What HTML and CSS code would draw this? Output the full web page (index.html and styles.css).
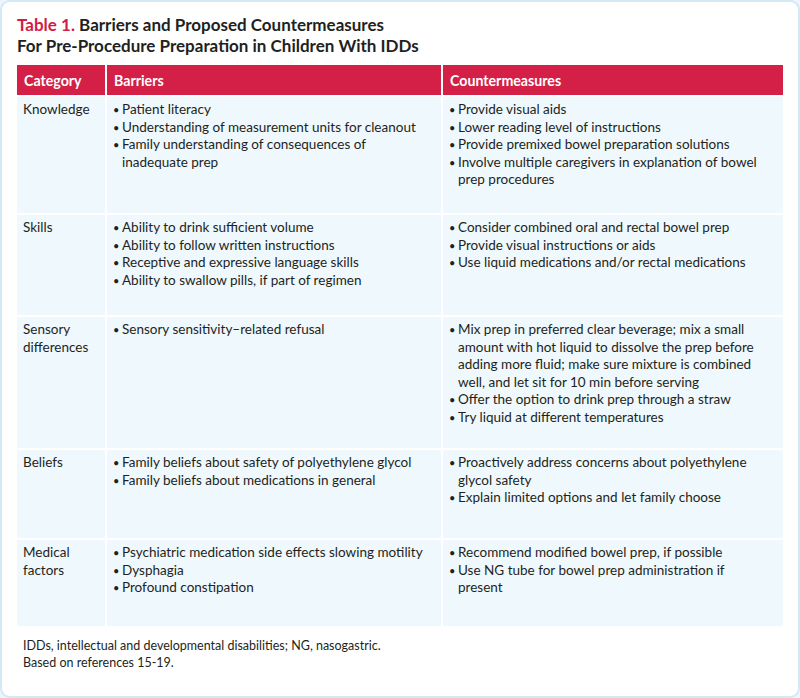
FILE: index.html
```html
<!DOCTYPE html>
<html>
<head>
<meta charset="utf-8">
<link rel="stylesheet" href="styles.css">
</head>
<body>
<div class="card">
  <h1 class="title"><span class="label">Table 1.</span> Barriers and Proposed Countermeasures<br>For Pre-Procedure Preparation in Children With IDDs</h1>
  <div class="table">
    <div class="th">Category</div>
    <div class="th">Barriers</div>
    <div class="th">Countermeasures</div>

    <div class="td cat">Knowledge</div>
    <div class="td"><ul>
      <li>Patient literacy</li>
      <li>Understanding of measurement units for cleanout</li>
      <li>Family understanding of consequences of inadequate prep</li>
    </ul></div>
    <div class="td cm"><ul>
      <li>Provide visual aids</li>
      <li>Lower reading level of instructions</li>
      <li>Provide premixed bowel preparation solutions</li>
      <li>Involve multiple caregivers in explanation of bowel prep procedures</li>
    </ul></div>

    <div class="td cat">Skills</div>
    <div class="td"><ul>
      <li>Ability to drink sufficient volume</li>
      <li>Ability to follow written instructions</li>
      <li>Receptive and expressive language skills</li>
      <li>Ability to swallow pills, if part of regimen</li>
    </ul></div>
    <div class="td cm"><ul>
      <li>Consider combined oral and rectal bowel prep</li>
      <li>Provide visual instructions or aids</li>
      <li>Use liquid medications and/or rectal medications</li>
    </ul></div>

    <div class="td cat">Sensory differences</div>
    <div class="td"><ul>
      <li>Sensory sensitivity–related refusal</li>
    </ul></div>
    <div class="td cm"><ul>
      <li>Mix prep in preferred clear beverage; mix a small amount with hot liquid to dissolve the prep before adding more fluid; make sure mixture is combined well, and let sit for 10 min before serving</li>
      <li>Offer the option to drink prep through a straw</li>
      <li>Try liquid at different temperatures</li>
    </ul></div>

    <div class="td cat">Beliefs</div>
    <div class="td"><ul>
      <li>Family beliefs about safety of polyethylene glycol</li>
      <li>Family beliefs about medications in general</li>
    </ul></div>
    <div class="td cm"><ul>
      <li>Proactively address concerns about polyethylene glycol safety</li>
      <li>Explain limited options and let family choose</li>
    </ul></div>

    <div class="td cat">Medical factors</div>
    <div class="td"><ul>
      <li>Psychiatric medication side effects slowing motility</li>
      <li>Dysphagia</li>
      <li>Profound constipation</li>
    </ul></div>
    <div class="td cm"><ul>
      <li>Recommend modified bowel prep, if possible</li>
      <li>Use NG tube for bowel prep administration if present</li>
    </ul></div>
  </div>
  <div class="notes">
    <p>IDDs, intellectual and developmental disabilities; NG, nasogastric.</p>
    <p>Based on references 15-19.</p>
  </div>
</div>
</body>
</html>
```

FILE: styles.css
```css
html, body {
  margin: 0;
  padding: 0;
  background: #eaf5fc;
}
body {
  font-family: Lato, "Open Sans", sans-serif;
  color: #231f20;
}
.card {
  box-sizing: border-box;
  width: 800px;
  height: 698px;
  background: #ffffff;
  border: 2px solid #d3e9f6;
  border-radius: 10px;
  padding: 12px 15px 0 15px;
}
.title {
  margin: 0 0 9px 0;
  font-size: 17px;
  line-height: 21px;
  font-weight: 700;
  color: #231f20;
}
.label {
  color: #d01d48;
}
.table {
  display: grid;
  grid-template-columns: 88px 334px 340px;
  grid-template-rows: 30px 116px 100px 131px 88px 86px;
  gap: 2px;
}
.th {
  background: #d41f46;
  color: #ffffff;
  font-weight: 700;
  font-size: 14.2px;
  display: flex;
  align-items: center;
  padding: 0 7px;
}
.td {
  background: #eef8fd;
  font-size: 13.5px;
  line-height: 17.5px;
  padding: 4px 12px 0 7px;
}
.cm {
  padding-right: 22px;
}
.cat {
  padding-left: 6px;
  padding-right: 4px;
}
ul {
  margin: 0;
  padding: 0;
  list-style: none;
}
li {
  position: relative;
  padding-left: 8px;
}
li::before {
  content: "•";
  position: absolute;
  left: -1px;
  top: 0;
  font-size: 11px;
}
.notes {
  padding: 11px 6px 0 6px;
  font-size: 12.5px;
  line-height: 17px;
}
.notes p {
  margin: 0;
}
```
